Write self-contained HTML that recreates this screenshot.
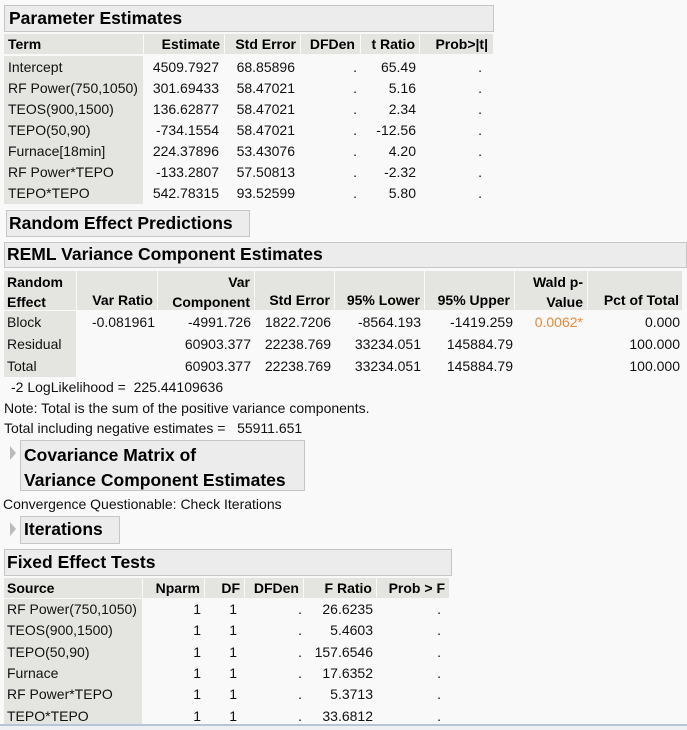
<!DOCTYPE html>
<html><head><style>
body{margin:0;width:687px;height:730px;background:#f9f9f9;font-family:"Liberation Sans",sans-serif;font-size:14px;color:#111;position:relative;overflow:hidden}
.a{position:absolute;white-space:nowrap}
.box{position:absolute;background:#ececec;border:1px solid #c6c6c6;box-sizing:border-box}
.ttl{position:absolute;font-weight:bold;font-size:17.5px;white-space:nowrap;color:#000}
.hd{position:absolute;background:#e4e4e0}
.th{position:absolute;font-weight:bold;white-space:nowrap;text-align:right;color:#000}
.tri{position:absolute;width:0;height:0;border-top:7px solid transparent;border-bottom:7px solid transparent;border-left:6px solid #bbb}
</style></head><body>

<div class="box" style="left:4px;top:5px;width:490px;height:27px"></div>
<div class="ttl" style="left:9px;top:8px">Parameter Estimates</div>
<div class="hd" style="left:4px;top:34px;width:139px;height:20px"></div>
<div class="hd" style="left:144px;top:34px;width:80px;height:20px"></div>
<div class="hd" style="left:225px;top:34px;width:75px;height:20px"></div>
<div class="hd" style="left:301px;top:34px;width:59px;height:20px"></div>
<div class="hd" style="left:361px;top:34px;width:58px;height:20px"></div>
<div class="hd" style="left:420px;top:34px;width:73px;height:20px"></div>
<div class="hd" style="left:4px;top:56px;width:139px;height:148px"></div>
<div class="th" style="left:8px;top:36px;text-align:left">Term</div>
<div class="th" style="left:144px;top:36px;width:76px">Estimate</div>
<div class="th" style="left:225px;top:36px;width:71px">Std Error</div>
<div class="th" style="left:301px;top:36px;width:54px">DFDen</div>
<div class="th" style="left:361px;top:36px;width:54px">t Ratio</div>
<div class="th" style="left:420px;top:36px;width:68px">Prob&gt;|t|</div>
<div id="pe"></div>

<div class="box" style="left:6px;top:210px;width:244px;height:27px"></div>
<div class="ttl" style="left:9px;top:213px">Random Effect Predictions</div>

<div class="box" style="left:4px;top:242px;width:683px;height:26px"></div>
<div class="ttl" style="left:7px;top:244px">REML Variance Component Estimates</div>
<div class="hd" style="left:4px;top:271px;width:72px;height:39px"></div>
<div class="hd" style="left:77px;top:271px;width:80px;height:39px"></div>
<div class="hd" style="left:158px;top:271px;width:96px;height:39px"></div>
<div class="hd" style="left:255px;top:271px;width:79px;height:39px"></div>
<div class="hd" style="left:335px;top:271px;width:89px;height:39px"></div>
<div class="hd" style="left:425px;top:271px;width:89px;height:39px"></div>
<div class="hd" style="left:515px;top:271px;width:72px;height:39px"></div>
<div class="hd" style="left:588px;top:271px;width:94px;height:39px"></div>
<div class="hd" style="left:4px;top:311px;width:72px;height:66px"></div>
<div class="th" style="left:7px;top:272px;text-align:left;line-height:20px">Random<br>Effect</div>
<div class="th" style="left:77px;top:292px;width:76px">Var Ratio</div>
<div class="th" style="left:158px;top:272px;width:92px;line-height:20px">Var<br>Component</div>
<div class="th" style="left:255px;top:292px;width:75px">Std Error</div>
<div class="th" style="left:335px;top:292px;width:85px">95% Lower</div>
<div class="th" style="left:425px;top:292px;width:85px">95% Upper</div>
<div class="th" style="left:515px;top:272px;width:68px;line-height:20px">Wald p-<br>Value</div>
<div class="th" style="left:588px;top:292px;width:91px">Pct of Total</div>
<div id="rm"></div>
<div class="a" style="left:11px;top:379px">-2 LogLikelihood =&nbsp; 225.44109636</div>
<div class="a" style="left:4px;top:400px">Note: Total is the sum of the positive variance components.</div>
<div class="a" style="left:4px;top:420px">Total including negative estimates =&nbsp;&nbsp; 55911.651</div>

<div class="tri" style="left:10px;top:446px"></div>
<div class="box" style="left:20px;top:440px;width:285px;height:51px"></div>
<div class="ttl" style="left:24px;top:443px;line-height:25px">Covariance Matrix of<br>Variance Component Estimates</div>
<div class="a" style="left:3px;top:496px">Convergence Questionable: Check Iterations</div>
<div class="tri" style="left:10px;top:522px"></div>
<div class="box" style="left:20px;top:516px;width:100px;height:28px"></div>
<div class="ttl" style="left:24px;top:519px">Iterations</div>

<div class="box" style="left:4px;top:549px;width:448px;height:27px"></div>
<div class="ttl" style="left:7px;top:552px">Fixed Effect Tests</div>
<div class="hd" style="left:4px;top:578px;width:138px;height:20px"></div>
<div class="hd" style="left:143px;top:578px;width:61px;height:20px"></div>
<div class="hd" style="left:205px;top:578px;width:39px;height:20px"></div>
<div class="hd" style="left:245px;top:578px;width:58px;height:20px"></div>
<div class="hd" style="left:304px;top:578px;width:72px;height:20px"></div>
<div class="hd" style="left:377px;top:578px;width:72px;height:20px"></div>
<div class="hd" style="left:4px;top:599px;width:138px;height:125px"></div>
<div class="th" style="left:7px;top:580px;text-align:left">Source</div>
<div class="th" style="left:143px;top:580px;width:57px">Nparm</div>
<div class="th" style="left:205px;top:580px;width:35px">DF</div>
<div class="th" style="left:245px;top:580px;width:54px">DFDen</div>
<div class="th" style="left:304px;top:580px;width:68px">F Ratio</div>
<div class="th" style="left:377px;top:580px;width:68px">Prob &gt; F</div>
<div id="fe"></div>
<div style="position:absolute;left:0;top:724px;width:687px;height:2px;background:#b8c4d8"></div>
<div style="position:absolute;left:0;top:726px;width:687px;height:4px;background:#eef0f4"></div>

<script>
function put(id,rows,cols,top,step){var h='';rows.forEach(function(r,i){r.forEach(function(t,j){var c=cols[j];var st='top:'+(top+i*step)+'px;';if(c[2]){st+='left:'+c[0]+'px;'}else{st+='left:'+(c[0]-c[1])+'px;width:'+c[1]+'px;text-align:right;'}if(c[3])st+='color:'+c[3]+';';h+='<div class="a" style="'+st+'">'+t+'</div>';});});document.getElementById(id).innerHTML=h;}
put('pe',[["Intercept","4509.7927","68.85896",".","65.49","."],["RF Power(750,1050)","301.69433","58.47021",".","5.16","."],["TEOS(900,1500)","136.62877","58.47021",".","2.34","."],["TEPO(50,90)","-734.1554","58.47021",".","-12.56","."],["Furnace[18min]","224.37896","53.43076",".","4.20","."],["RF Power*TEPO","-133.2807","57.50813",".","-2.32","."],["TEPO*TEPO","542.78315","93.52599",".","5.80","."]],
[[8,0,1],[219,90],[295,90],[357,40],[416,60],[482,40]],59,21);
put('rm',[["Block","-0.081961","-4991.726","1822.7206","-8564.193","-1419.259","0.0062*","0.000"],["Residual","","60903.377","22238.769","33234.051","145884.79","","100.000"],["Total","","60903.377","22238.769","33234.051","145884.79","","100.000"]],
[[7,0,1],[155,90],[251,100],[331,90],[421,90],[513,90],[583,80,0,"#e8883a"],[680,90]],314,22);
put('fe',[["RF Power(750,1050)","1","1",".","26.6235","."],["TEOS(900,1500)","1","1",".","5.4603","."],["TEPO(50,90)","1","1",".","157.6546","."],["Furnace","1","1",".","17.6352","."],["RF Power*TEPO","1","1",".","5.3713","."],["TEPO*TEPO","1","1",".","33.6812","."]],
[[7,0,1],[201,40],[237,30],[302,30],[373,80],[441,30]],601,21.3);
</script>
</body></html>
